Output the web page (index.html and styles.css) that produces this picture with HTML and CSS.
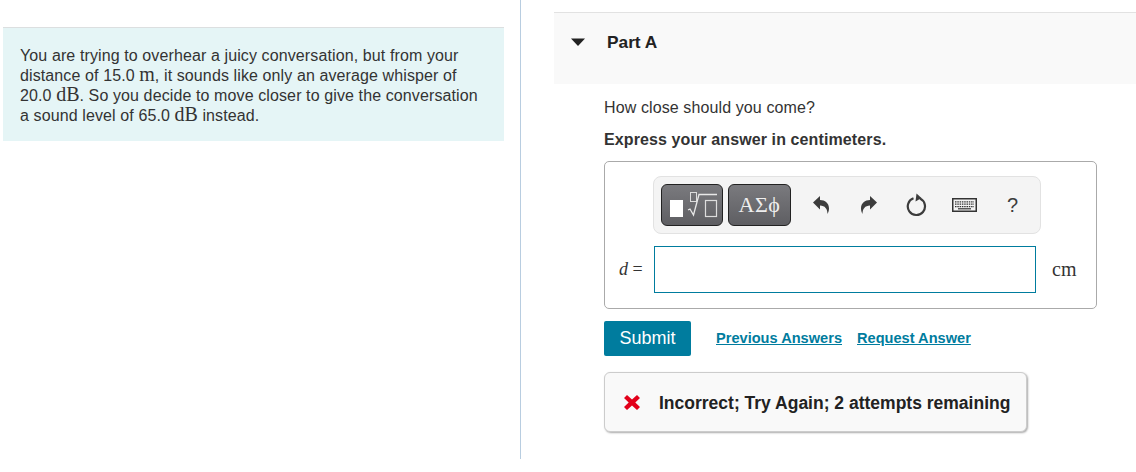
FILE: index.html
```html
<!DOCTYPE html>
<html lang="en">
<head>
    <meta charset="UTF-8">
    <title>Part A</title>
    <link rel="stylesheet" href="styles.css">
</head>
<body>
    <div class="page">
        <div class="left-col">
            <div class="intro">
                You are trying to overhear a juicy conversation, but from your<br>
                distance of 15.0 <span class="math">m</span>, it sounds like only an average whisper of<br>
                20.0 <span class="math">dB</span>. So you decide to move closer to give the conversation<br>
                a sound level of 65.0 <span class="math">dB</span> instead.
            </div>
        </div>
        <div class="right-col">
            <div class="part-head">
                <svg class="caret" width="14" height="8" viewBox="0 0 14 8"><path d="M0 0.5H14L7 8Z" fill="#222"/></svg>
                <span class="part-title">Part A</span>
            </div>
            <div class="part-body">
                <p class="question">How close should you come?</p>
                <p class="instruction">Express your answer in centimeters.</p>
                <div class="answer-box">
                    <div class="toolbar">
                        <div class="tool-btn tool-templates">
                            <svg width="60" height="40" viewBox="0 0 60 40">
                                <rect x="8" y="15" width="13" height="17" fill="#fff"/>
                                <rect x="28.500" y="7.500" width="6" height="9" fill="none" stroke="#ddd"/>
                                <path d="M26 25L28 24L31.500 30L37 9.500H55" fill="none" stroke="#e8e8e8" stroke-width="1.300"/>
                                <rect x="43.500" y="15.500" width="11" height="16" fill="none" stroke="#ddd" stroke-width="1.200"/>
                            </svg>
                        </div>
                        <div class="tool-btn tool-symbols">ΑΣϕ</div>
                        <div class="tool-icons">
                            <svg class="tool-undo" width="18" height="20" viewBox="0 0 18 20"><path d="M1 7.500L8 1V5C13 5 17 8 17 13.500C17 15.500 16.300 17.500 15.500 19C15.500 14 13 10.500 8 10.500V14.500Z" fill="#3c3c3c"/></svg>
                            <svg class="tool-redo" width="18" height="20" viewBox="0 0 18 20"><path d="M17 7.500L10 1V5C5 5 1 8 1 13.500C1 15.500 1.700 17.500 2.500 19C2.500 14 5 10.500 10 10.500V14.500Z" fill="#3c3c3c"/></svg>
                            <svg class="tool-reset" width="21" height="24" viewBox="0 0 21 24"><path d="M7.500 5.300A8.600 8.600 0 1 0 14 5.600" fill="none" stroke="#3c3c3c" stroke-width="2.200"/><path d="M10.500 0.500L15.500 5L9.500 8.500Z" fill="#3c3c3c"/></svg>
                            <svg class="tool-keyboard" width="25" height="14" viewBox="0 0 25 14">
                                <rect x="0.750" y="0.750" width="23.500" height="12.500" fill="#f4f4f4" stroke="#333" stroke-width="1.500"/>
                                <path d="M3 3.800H22M3 6.200H22" stroke="#333" stroke-width="1.200" stroke-dasharray="1.500 0.800"/>
                                <path d="M3 8.600H22" stroke="#333" stroke-width="1.200" stroke-dasharray="1.500 0.800"/>
                                <path d="M6 10.800H19" stroke="#333" stroke-width="1.200"/>
                            </svg>
                            <span class="tool-help">?</span>
                        </div>
                    </div>
                    <div class="answer-row">
                        <span class="answer-label"><i>d</i> =</span>
                        <input class="answer-input" type="text">
                        <span class="answer-unit">cm</span>
                    </div>
                </div>
                <div class="actions">
                    <button class="submit-btn">Submit</button>
                    <a class="action-link first-link" href="#">Previous Answers</a>
                    <a class="action-link" href="#">Request Answer</a>
                </div>
                <div class="feedback">
                    <svg class="x-icon" width="18" height="17" viewBox="0 0 18 17"><path d="M1 4L4 1L9 5.500L14 1L17 4L12.300 8.500L17 13L14 16L9 11.500L4 16L1 13L5.700 8.500Z" fill="#e2001a"/></svg>
                    <span class="feedback-text">Incorrect; Try Again; 2 attempts remaining</span>
                </div>
            </div>
        </div>
    </div>
</body>
</html>
```

FILE: styles.css
```css
body {
    margin: 0;
    background-color: #fff;
    font-family: "Liberation Sans", Arial, sans-serif;
    color: #333;
}
.page {
    display: flex;
    height: 459px;
}
.left-col {
    width: 520px;
    flex-shrink: 0;
    border-right: 1px solid #b8cde0;
    padding-top: 27px;
}
.intro {
    box-sizing: border-box;
    width: 501px;
    height: 114px;
    margin-left: 3px;
    padding: 18px 17px 0;
    background-color: #e5f5f6;
    border-top: 1px solid #dcdfe0;
    font-size: 16px;
    line-height: 20px;
    letter-spacing: 0.11px;
}
.math {
    font-family: "Liberation Serif", serif;
    font-size: 20px;
    line-height: 0;
    letter-spacing: 0;
}
.right-col {
    flex: 1;
    margin-left: 33px;
    padding-top: 12px;
}
.part-head {
    display: flex;
    align-items: flex-start;
    height: 71px;
    background-color: #f9f9f9;
    border-top: 1px solid #e2e2e2;
}
.caret {
    margin: 25px 0 0 17px;
}
.part-title {
    margin: 19px 0 0 22px;
    font-size: 17.300px;
    line-height: 20px;
    font-weight: bold;
    color: #222;
}
.part-body {
    padding-left: 50px;
}
.question {
    margin: 14px 0 0;
    font-size: 16px;
    line-height: 20px;
    letter-spacing: 0.11px;
}
.instruction {
    margin: 12px 0 0;
    font-size: 16px;
    line-height: 20px;
    font-weight: bold;
    letter-spacing: 0.11px;
}
.answer-box {
    box-sizing: border-box;
    width: 493px;
    height: 148px;
    margin-top: 11px;
    padding: 14px 0 0 48px;
    border: 1px solid #aaa;
    border-radius: 5px;
}
.toolbar {
    box-sizing: border-box;
    display: flex;
    align-items: center;
    width: 388px;
    height: 58px;
    padding-left: 7px;
    background-color: #f4f4f4;
    border: 1px solid #e2e2e2;
    border-radius: 8px;
}
.tool-btn {
    box-sizing: border-box;
    display: flex;
    align-items: center;
    justify-content: center;
    height: 42px;
    background: linear-gradient(#7a7a7e, #5e5e62);
    border: 1px solid #222;
    border-radius: 6px;
    color: #eee;
}
.tool-templates {
    width: 62px;
}
.tool-symbols {
    width: 63px;
    margin-left: 5px;
    font-family: "Liberation Serif", serif;
    font-size: 22px;
    letter-spacing: 0.5px;
}
.tool-icons {
    display: flex;
    align-items: center;
}
.tool-undo {
    margin-left: 21px;
}
.tool-redo {
    margin-left: 30px;
}
.tool-reset {
    margin-left: 28px;
}
.tool-keyboard {
    margin-left: 25px;
}
.tool-help {
    margin-left: 30px;
    font-size: 20px;
    color: #3c3c3c;
}
.answer-row {
    display: flex;
    align-items: center;
    margin: 12px 0 0 -34px;
}
.answer-label {
    width: 35px;
    font-family: "Liberation Serif", serif;
    font-size: 18px;
}
.answer-input {
    box-sizing: border-box;
    width: 382px;
    height: 47px;
    margin: 0;
    border: 1px solid #007c9e;
    outline: none;
    background: #fff;
}
.answer-unit {
    margin-left: 16px;
    font-family: "Liberation Serif", serif;
    font-size: 20px;
}
.actions {
    display: flex;
    align-items: center;
    margin-top: 12px;
}
.submit-btn {
    width: 87px;
    height: 35px;
    padding: 0;
    background-color: #007c9e;
    border: none;
    border-radius: 2px;
    color: #fff;
    font-family: "Liberation Sans", Arial, sans-serif;
    font-size: 18px;
}
.action-link {
    margin: 0 0 2px 15px;
    font-size: 14.600px;
    font-weight: bold;
    color: #007c9e;
}
.first-link {
    margin-left: 25px;
}
.feedback {
    box-sizing: border-box;
    display: flex;
    align-items: center;
    width: 423px;
    height: 60px;
    margin-top: 16px;
    padding-left: 18px;
    background-color: #f9f9f9;
    border: 1px solid #ccc;
    border-radius: 6px;
    box-shadow: 1px 1px 2px #aaa;
}
.feedback-text {
    margin: 2px 0 0 18px;
    font-size: 17.500px;
    font-weight: bold;
    color: #222;
}
```
